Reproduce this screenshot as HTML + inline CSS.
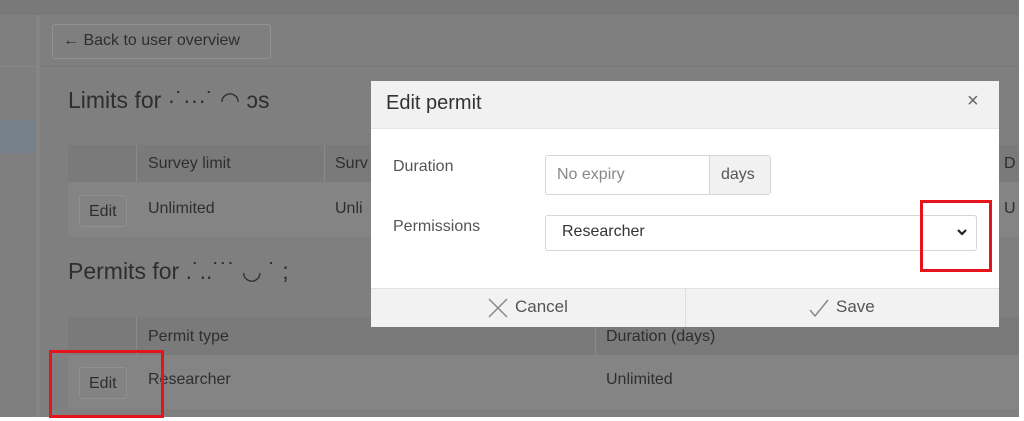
<!DOCTYPE html>
<html><head><meta charset="utf-8"><style>
*{box-sizing:border-box;margin:0;padding:0}
body{width:1024px;height:421px;background:#fff;font-family:"Liberation Sans",sans-serif;position:relative;overflow:hidden;color:#333}
.a{position:absolute}
.t{font-size:16px;color:#2e2e2e}
</style></head><body>
<div class="a" style="left:0;top:0;width:1019px;height:417px;background:#7f7f7f"></div>
<div class="a" style="left:0;top:0;width:1019px;height:15px;background:#797979"></div>
<div class="a" style="left:0;top:120px;width:36px;height:33px;background:#76808a"></div>
<div class="a" style="left:0;top:66px;width:36px;height:1px;background:#888"></div>
<div class="a" style="left:36px;top:15px;width:4px;height:402px;background:#858585"></div>
<div class="a" style="left:40px;top:66px;width:979px;height:1px;background:#777"></div>
<div class="a t" style="left:52px;top:24px;width:219px;height:35px;border:1px solid #929292;border-radius:3px;padding:7px 10px;font-size:16px">← Back to user overview</div>
<div class="a" style="left:68px;top:87px;font-size:23px;color:#2e2e2e">Limits for ·˙···˙ ◠ ɔs</div>
<div class="a" style="left:68px;top:145px;width:951px;height:92px;background:#848484"></div>
<div class="a" style="left:68px;top:145px;width:951px;height:37px;background:#7a7a7a"></div>
<div class="a" style="left:136px;top:145px;width:1px;height:37px;background:#8a8a8a"></div>
<div class="a" style="left:324px;top:145px;width:1px;height:37px;background:#8a8a8a"></div>
<div class="a t" style="left:148px;top:155px">Survey limit</div>
<div class="a t" style="left:335px;top:155px">Surv</div>
<div class="a t" style="left:148px;top:200px">Unlimited</div>
<div class="a t" style="left:335px;top:200px">Unli</div>
<div class="a t" style="left:79px;top:195px;width:48px;height:32px;border:1px solid #909090;border-radius:3px;padding:7px 9px;background:#838383">Edit</div>
<div class="a" style="left:68px;top:258px;font-size:23px;color:#2e2e2e">Permits for .˙..˙˙˙ ◡ ˙ ;</div>
<div class="a" style="left:68px;top:317px;width:951px;height:92px;background:#848484"></div>
<div class="a" style="left:68px;top:317px;width:951px;height:38px;background:#7a7a7a"></div>
<div class="a" style="left:136px;top:317px;width:1px;height:38px;background:#8a8a8a"></div>
<div class="a" style="left:595px;top:317px;width:1px;height:38px;background:#8a8a8a"></div>
<div class="a t" style="left:148px;top:328px">Permit type</div>
<div class="a t" style="left:606px;top:328px">Duration (days)</div>
<div class="a t" style="left:148px;top:371px">Researcher</div>
<div class="a t" style="left:606px;top:371px">Unlimited</div>
<div class="a t" style="left:79px;top:367px;width:48px;height:32px;border:1px solid #909090;border-radius:3px;padding:7px 9px;background:#838383">Edit</div>
<div class="a t" style="left:1004px;top:155px">D</div>
<div class="a t" style="left:1004px;top:200px">U</div>
<!-- modal -->
<div class="a" style="left:371px;top:81px;width:628px;height:246px;background:#fff"></div>
<div class="a" style="left:371px;top:81px;width:628px;height:48px;background:#f1f1f1;border-bottom:1px solid #e6e6e6"></div>
<div class="a" style="left:386px;top:92px;font-size:20px;color:#333">Edit permit</div>
<div class="a" style="left:967px;top:90px;font-size:20px;color:#666">×</div>
<div class="a" style="left:393px;top:158px;font-size:16px;color:#555">Duration</div>
<div class="a" style="left:393px;top:218px;font-size:16px;color:#555">Permissions</div>
<div class="a" style="left:545px;top:155px;width:226px;height:40px;border:1px solid #d6d6d6;border-radius:3px"></div>
<div class="a" style="left:709px;top:156px;width:61px;height:38px;background:#f1f1f1;border-left:1px solid #d6d6d6"></div>
<div class="a" style="left:557px;top:166px;font-size:16px;color:#888">No expiry</div>
<div class="a" style="left:721px;top:166px;font-size:16px;color:#555">days</div>
<div class="a" style="left:545px;top:215px;width:432px;height:36px;border:1px solid #d6d6d6;border-radius:3px"></div>
<div class="a" style="left:562px;top:223px;font-size:16px;color:#333">Researcher</div>
<svg class="a" style="left:955px;top:226px" width="14" height="12"><path d="M3 4L7 8L11 4" stroke="#222" stroke-width="2.2" fill="none"/></svg>
<div class="a" style="left:371px;top:288px;width:628px;height:39px;background:#f2f2f2;border-top:1px solid #e2e2e2"></div>
<div class="a" style="left:685px;top:289px;width:1px;height:38px;background:#ddd"></div>
<svg class="a" style="left:487px;top:298px" width="22" height="20"><path d="M2 1L20 19M20 1L2 19" stroke="#888" stroke-width="1.5"/></svg>
<div class="a" style="left:515px;top:297px;font-size:17px;color:#555">Cancel</div>
<svg class="a" style="left:808px;top:298px" width="22" height="20"><path d="M2 12L7 18L20 2" stroke="#888" stroke-width="1.5" fill="none"/></svg>
<div class="a" style="left:836px;top:297px;font-size:17px;color:#555">Save</div>
<!-- red boxes -->
<div class="a" style="left:49px;top:350px;width:115px;height:68px;border:3px solid #e4141c"></div>
<div class="a" style="left:920px;top:200px;width:72px;height:72px;border:3px solid #e4141c"></div>
</body></html>
